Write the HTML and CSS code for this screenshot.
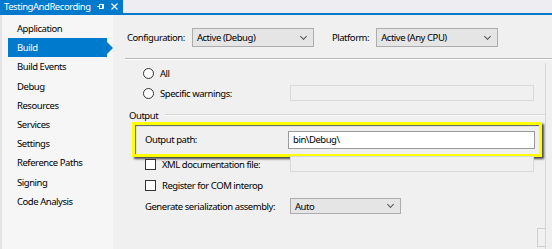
FILE: index.html
```html
<!DOCTYPE html>
<html lang="en">
<head>
    <meta charset="UTF-8">
    <title>TestingAndRecording</title>
    <link rel="stylesheet" href="styles.css">
</head>
<body>
    <div class="tabstrip">
        <div class="tab">
            <span class="tab-title">TestingAndRecording</span>
            <svg class="tab-icon pin" width="7" height="7" viewBox="0 0 7 7">
                <path d="M0 3.5h2.5M2.5 1v5M2.5 1.5h4v4h-4M5.5 1.5v4" stroke="#fff" stroke-width="1" fill="none"/>
            </svg>
            <svg class="tab-icon" width="7" height="7" viewBox="0 0 7 7">
                <path d="M0.5 0.5l6 6M6.5 0.5l-6 6" stroke="#fff" stroke-width="1.2"/>
            </svg>
        </div>
    </div>
    <div class="tabline"></div>

    <div class="main">
        <ul class="sidebar">
            <li>Application</li>
            <li class="active">Build</li>
            <li>Build Events</li>
            <li>Debug</li>
            <li>Resources</li>
            <li>Services</li>
            <li>Settings</li>
            <li>Reference Paths</li>
            <li>Signing</li>
            <li>Code Analysis</li>
        </ul>

        <div class="content">
            <div class="config-row">
                <span class="config-label">Configuration:</span>
                <div class="select select-top">Active (Debug)<span class="chevron"></span></div>
                <span class="config-label platform-label">Platform:</span>
                <div class="select select-top">Active (Any CPU)<span class="chevron"></span></div>
            </div>
            <div class="divider"></div>

            <div class="panel">
                <div class="panel-body">
                    <div class="row radio-row">
                        <span class="radio"></span>All
                    </div>
                    <div class="row radio-row">
                        <div class="label-col wide"><span class="radio"></span>Specific warnings:</div>
                        <div class="textbox disabled"></div>
                    </div>

                    <div class="group-head">
                        <span>Output</span>
                        <span class="group-line"></span>
                    </div>

                    <div class="highlight">
                        <div class="label-col">Output path:</div>
                        <div class="textbox path">bin\Debug\</div>
                    </div>

                    <div class="row form-row xml-row">
                        <div class="label-col"><span class="checkbox"></span>XML documentation file:</div>
                        <div class="textbox disabled"></div>
                    </div>
                    <div class="row form-row com-row">
                        <span class="checkbox"></span>Register for COM interop
                    </div>
                    <div class="row form-row gen-row">
                        <div class="label-col">Generate serialization assembly:</div>
                        <div class="select select-small">Auto<span class="chevron"></span></div>
                    </div>
                </div>
                <div class="scroll-edge">
                    <div class="scroll-btn"></div>
                </div>
            </div>
        </div>
    </div>
</body>
</html>
```

FILE: styles.css
```css
body {
    margin: 0;
    width: 552px;
    height: 249px;
    overflow: hidden;
    font-family: "Noto Sans", "Open Sans", sans-serif;
    font-size: 9.5px;
    letter-spacing: -0.45px;
    color: #000;
    background-color: #f0f0f0;
}
.tabstrip {
    height: 13px;
    background-color: #eeeef2;
    display: flex;
}
.tab {
    width: 123px;
    background-color: #007acc;
    color: #fff;
    display: flex;
    align-items: center;
    padding-left: 4px;
    box-sizing: border-box;
    white-space: nowrap;
}
.tab-title {
    line-height: 13px;
    margin-right: 6px;
}
.tab-icon {
    flex-shrink: 0;
}
.tab-icon.pin {
    margin-right: 7px;
}
.tabline {
    height: 2px;
    background-color: #007acc;
}
.main {
    display: flex;
    height: 234px;
}
.sidebar {
    list-style: none;
    margin: 0;
    padding: 4px 0 0 0;
    width: 111px;
    border-left: 2px solid #e4e4e4;
    background-color: #f6f6f6;
}
.sidebar li {
    position: relative;
    height: 19.2px;
    line-height: 19.2px;
    margin-left: 6px;
    width: 99px;
    padding-left: 9px;
    box-sizing: border-box;
}
.sidebar li.active {
    background-color: #007acc;
    color: #fff;
}
.sidebar li.active::after {
    content: "";
    position: absolute;
    right: -6px;
    top: 3.6px;
    border-top: 6px solid transparent;
    border-bottom: 6px solid transparent;
    border-left: 6px solid #007acc;
}
.content {
    flex: 1;
    display: flex;
    flex-direction: column;
    background-color: #f0f0f0;
}
.config-row {
    display: flex;
    align-items: center;
    padding: 13px 0 0 14px;
    height: 19px;
    white-space: nowrap;
}
.config-label {
    margin-right: 7px;
}
.platform-label {
    margin-left: 18px;
}
.select {
    position: relative;
    box-sizing: border-box;
    background-color: #e5e5e5;
    border: 1px solid #adadad;
    padding-left: 4px;
    display: flex;
    align-items: center;
}
.select-top {
    width: 122px;
    height: 19px;
}
.select-small {
    width: 111px;
    height: 16px;
}
.chevron {
    position: absolute;
    right: 7px;
    top: 50%;
    width: 4px;
    height: 4px;
    margin-top: -4px;
    border-right: 1px solid #555;
    border-bottom: 1px solid #555;
    transform: rotate(45deg);
}
.divider {
    margin: 11px 0 0 12px;
    border-top: 1px solid #b9b9b9;
    border-bottom: 1px solid #fcfcfc;
}
.panel {
    flex: 1;
    display: flex;
    margin-top: 3px;
}
.panel-body {
    flex: 1;
}
.scroll-edge {
    width: 3px;
    border-left: 1px solid #d6d6d6;
    margin-right: 3px;
    display: flex;
    flex-direction: column;
    justify-content: flex-end;
}
.scroll-btn {
    height: 19px;
    width: 8px;
    margin-left: -9px;
    margin-bottom: 2px;
    border: 1px solid #cfcfcf;
    border-right: none;
    box-sizing: border-box;
}
.row {
    display: flex;
    align-items: center;
    white-space: nowrap;
}
.radio-row {
    height: 20px;
    padding-left: 30px;
}
.label-col {
    display: flex;
    align-items: center;
    width: 145px;
    flex-shrink: 0;
    white-space: nowrap;
}
.label-col.wide {
    width: 147px;
}
.radio {
    width: 9px;
    height: 9px;
    border: 1px solid #333;
    border-radius: 50%;
    background-color: #fff;
    margin-right: 6px;
}
.checkbox {
    width: 9px;
    height: 9px;
    border: 1px solid #333;
    background-color: #fff;
    margin-right: 6px;
}
.textbox {
    box-sizing: border-box;
    width: 244px;
    height: 16px;
    border: 1px solid #d9d9d9;
    background-color: #f0f0f0;
}
.textbox.path {
    width: 247px;
    height: 18px;
    border: 1px solid #9b9b9b;
    background-color: #fff;
    padding-left: 4px;
    line-height: 16px;
}
.group-head {
    display: flex;
    align-items: center;
    height: 12px;
    margin: 6px 0 0 16px;
}
.group-line {
    flex: 1;
    margin-left: 7px;
    border-top: 1px solid #d5d5d5;
    border-bottom: 1px solid #fafafa;
}
.highlight {
    display: flex;
    align-items: center;
    box-sizing: border-box;
    width: 410px;
    height: 35px;
    margin: 1px 0 0 19px;
    padding-left: 10px;
    border: 3px solid #ffff00;
    box-shadow: 2px 2px 2px rgba(0, 0, 0, 0.7), inset 1px 1px 1px rgba(0, 0, 0, 0.6);
}
.highlight .label-col {
    width: 143px;
}
.form-row {
    padding-left: 32px;
}
.xml-row {
    height: 16px;
    margin-top: -1px;
}
.com-row {
    height: 16px;
    margin-top: 5px;
}
.gen-row {
    height: 18px;
    margin-top: 4px;
}
```
